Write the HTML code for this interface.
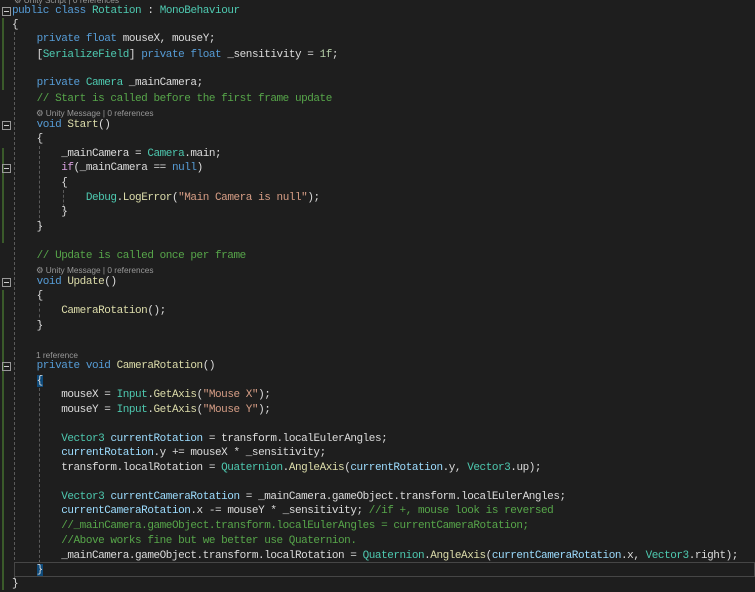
<!DOCTYPE html>
<html><head><style>
body{margin:0;width:755px;height:592px;background:#1e1e1e;overflow:hidden;position:relative;font-family:"Liberation Mono",monospace;}
.l{position:absolute;left:12px;height:15px;line-height:15px;font-size:11px;letter-spacing:-0.45px;white-space:pre;color:#dcdcdc;}
.cl{position:absolute;height:12px;line-height:12px;font-family:"Liberation Sans",sans-serif;font-size:8.3px;color:#999;white-space:pre;}
.k{color:#569cd6}.t{color:#4ec9b0}.m{color:#dcdcaa}.v{color:#9cdcfe}.s{color:#d69d85}.c{color:#57a64a}.n{color:#b5cea8}.p{color:#d8a0df}
.g{position:absolute;border-left:1px dashed #5a5a5a;width:0}
.fold{position:absolute;left:2px;width:9px;height:9px;border:1px solid #999;box-sizing:border-box}
.fold:after{content:"";position:absolute;left:1px;top:3px;width:5px;height:1px;background:#ccc}
.br{background:#0e4a7a}
</style></head><body>
<div style="position:absolute;left:2px;top:18px;width:2px;height:72px;background:#3a5a2a"></div>
<div style="position:absolute;left:2px;top:148px;width:2px;height:95px;background:#3a5a2a"></div>
<div style="position:absolute;left:2px;top:290px;width:2px;height:300px;background:#3a5a2a"></div>
<div class="g" style="left:14px;top:32px;height:548px"></div>
<div class="g" style="left:39px;top:146px;height:82px"></div>
<div class="g" style="left:63px;top:190px;height:22px"></div>
<div class="g" style="left:39px;top:303px;height:20px"></div>
<div class="g" style="left:39px;top:388px;height:180px"></div>
<div style="position:absolute;left:14px;top:562px;width:741px;height:15px;border:1px solid #464646;box-sizing:border-box"></div>
<div class="cl" style="left:14px;top:-6px">⚙ Unity Script | 0 references</div>
<div class="fold" style="top:7px"></div>
<div class="fold" style="top:121px"></div>
<div class="fold" style="top:164px"></div>
<div class="fold" style="top:278px"></div>
<div class="fold" style="top:362px"></div>
<div class="l" style="top:4px"><span class="k">public</span> <span class="k">class</span> <span class="t">Rotation</span> : <span class="t">MonoBehaviour</span></div>
<div class="l" style="top:18px">{</div>
<div class="l" style="top:32px">    <span class="k">private</span> <span class="k">float</span> mouseX, mouseY;</div>
<div class="l" style="top:48px">    [<span class="t">SerializeField</span>] <span class="k">private</span> <span class="k">float</span> _sensitivity = <span class="n">1f</span>;</div>
<div class="l" style="top:76px">    <span class="k">private</span> <span class="t">Camera</span> _mainCamera;</div>
<div class="l" style="top:92px">    <span class="c">// Start is called before the first frame update</span></div>
<div class="cl" style="left:36px;top:107px">⚙ Unity Message | 0 references</div>
<div class="l" style="top:118px">    <span class="k">void</span> <span class="m">Start</span>()</div>
<div class="l" style="top:132px">    {</div>
<div class="l" style="top:147px">        _mainCamera = <span class="t">Camera</span>.main;</div>
<div class="l" style="top:161px">        <span class="p">if</span>(_mainCamera == <span class="k">null</span>)</div>
<div class="l" style="top:176px">        {</div>
<div class="l" style="top:191px">            <span class="t">Debug</span>.<span class="m">LogError</span>(<span class="s">"Main Camera is null"</span>);</div>
<div class="l" style="top:205px">        }</div>
<div class="l" style="top:220px">    }</div>
<div class="l" style="top:249px">    <span class="c">// Update is called once per frame</span></div>
<div class="cl" style="left:36px;top:264px">⚙ Unity Message | 0 references</div>
<div class="l" style="top:275px">    <span class="k">void</span> <span class="m">Update</span>()</div>
<div class="l" style="top:289px">    {</div>
<div class="l" style="top:304px">        <span class="m">CameraRotation</span>();</div>
<div class="l" style="top:319px">    }</div>
<div class="cl" style="left:36px;top:349px">1 reference</div>
<div class="l" style="top:359px">    <span class="k">private</span> <span class="k">void</span> <span class="m">CameraRotation</span>()</div>
<div class="l" style="top:374px">    <span class="br">{</span></div>
<div class="l" style="top:388px">        mouseX = <span class="t">Input</span>.<span class="m">GetAxis</span>(<span class="s">"Mouse X"</span>);</div>
<div class="l" style="top:403px">        mouseY = <span class="t">Input</span>.<span class="m">GetAxis</span>(<span class="s">"Mouse Y"</span>);</div>
<div class="l" style="top:432px">        <span class="t">Vector3</span> <span class="v">currentRotation</span> = transform.localEulerAngles;</div>
<div class="l" style="top:446px">        <span class="v">currentRotation</span>.y += mouseX * _sensitivity;</div>
<div class="l" style="top:461px">        transform.localRotation = <span class="t">Quaternion</span>.<span class="m">AngleAxis</span>(<span class="v">currentRotation</span>.y, <span class="t">Vector3</span>.up);</div>
<div class="l" style="top:490px">        <span class="t">Vector3</span> <span class="v">currentCameraRotation</span> = _mainCamera.gameObject.transform.localEulerAngles;</div>
<div class="l" style="top:504px">        <span class="v">currentCameraRotation</span>.x -= mouseY * _sensitivity; <span class="c">//if +, mouse look is reversed</span></div>
<div class="l" style="top:519px">        <span class="c">//_mainCamera.gameObject.transform.localEulerAngles = currentCameraRotation;</span></div>
<div class="l" style="top:534px">        <span class="c">//Above works fine but we better use Quaternion.</span></div>
<div class="l" style="top:549px">        _mainCamera.gameObject.transform.localRotation = <span class="t">Quaternion</span>.<span class="m">AngleAxis</span>(<span class="v">currentCameraRotation</span>.x, <span class="t">Vector3</span>.right);</div>
<div class="l" style="top:563px">    <span class="br">}</span></div>
<div class="l" style="top:577px">}</div>
</body></html>
